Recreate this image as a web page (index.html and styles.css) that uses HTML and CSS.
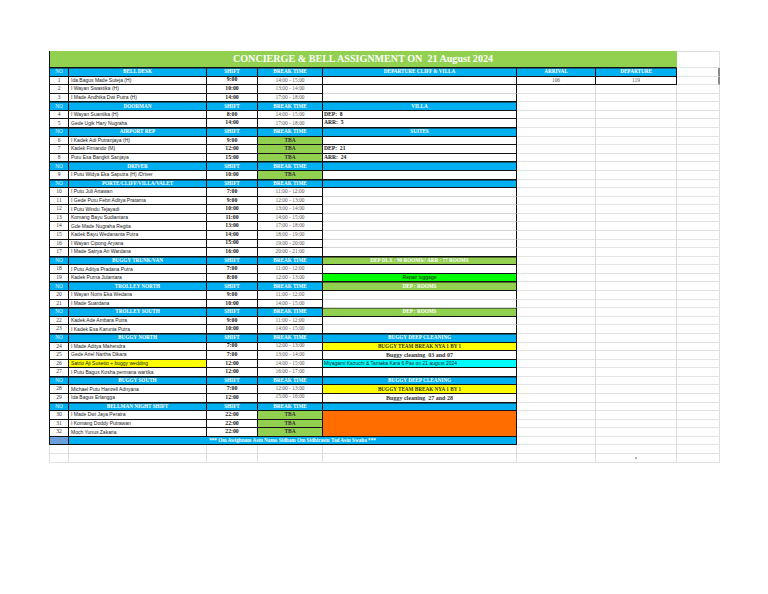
FILE: index.html
```html
<!DOCTYPE html>
<html lang="en">
<head>
<meta charset="utf-8">
<title>Concierge &amp; Bell Assignment</title>
<link rel="stylesheet" href="styles.css">
</head>
<body>
<div class="sheet">
  <div class="title">CONCIERGE &amp; BELL ASSIGNMENT ON &nbsp;21 August 2024</div><div class="g gt"></div>

  <div class="hn">NO</div><div class="h">BELL DESK</div><div class="h">SHIFT</div><div class="h">BREAK TIME</div><div class="h">DEPARTURE CLIFF &amp; VILLA</div><div class="h">ARRIVAL</div><div class="h">DEPARTURE</div><div class="g gm"></div>
  <div class="n">1</div><div class="nm">Ida Bagus Made Suteja (H)</div><div class="s">9:00</div><div class="b">14:00 - 15:00</div><div class="d"></div><div class="v">106</div><div class="v">119</div><div class="g gm"></div>
  <div class="n">2</div><div class="nm">I Wayan Swastika (H)</div><div class="s">10:00</div><div class="b">13:00 - 14:00</div><div class="d dg"></div><div class="g"></div><div class="g"></div><div class="g"></div>
  <div class="n">3</div><div class="nm">I Made Andhika Dwi Putra (H)</div><div class="s">14:00</div><div class="b">17:00 - 18:00</div><div class="d"></div><div class="g"></div><div class="g"></div><div class="g"></div>

  <div class="hn">NO</div><div class="h">DOORMAN</div><div class="h">SHIFT</div><div class="h">BREAK TIME</div><div class="h">VILLA</div><div class="g"></div><div class="g"></div><div class="g"></div>
  <div class="n">4</div><div class="nm">I Wayan Suantika (H)</div><div class="s">8:00</div><div class="b">14:00 - 15:00</div><div class="d dl">DEP: &nbsp;8</div><div class="g"></div><div class="g"></div><div class="g"></div>
  <div class="n">5</div><div class="nm">Gede Ugik Hary Nugraha</div><div class="s">14:00</div><div class="b">17:00 - 18:00</div><div class="d dl">ARR: &nbsp;5</div><div class="g"></div><div class="g"></div><div class="g"></div>

  <div class="hn">NO</div><div class="h">AIRPORT REP</div><div class="h">SHIFT</div><div class="h">BREAK TIME</div><div class="h">SUITES</div><div class="g"></div><div class="g"></div><div class="g"></div>
  <div class="n">6</div><div class="nm">I Kadek Adi Putranjaya (H)</div><div class="s">9:00</div><div class="tba">TBA</div><div class="d"></div><div class="g"></div><div class="g"></div><div class="g"></div>
  <div class="n">7</div><div class="nm">Kadek Firnando (M)</div><div class="s">12:00</div><div class="tba">TBA</div><div class="d dl">DEP: &nbsp;21</div><div class="g"></div><div class="g"></div><div class="g"></div>
  <div class="n">8</div><div class="nm">Putu Esa Bangkit Sanjaya</div><div class="s">15:00</div><div class="tba">TBA</div><div class="d dl">ARR: &nbsp;24</div><div class="g"></div><div class="g"></div><div class="g"></div>

  <div class="hn">NO</div><div class="h">DRIVER</div><div class="h">SHIFT</div><div class="h">BREAK TIME</div><div class="h"></div><div class="g"></div><div class="g"></div><div class="g"></div>
  <div class="n">9</div><div class="nm">I Putu Widya Eka Saputra (H) /Driver</div><div class="s">10:00</div><div class="tba">TBA</div><div class="d"></div><div class="g"></div><div class="g"></div><div class="g"></div>

  <div class="hn">NO</div><div class="h">PORTE/CLIFF/VILLA/VALET</div><div class="h">SHIFT</div><div class="h">BREAK TIME</div><div class="h"></div><div class="g"></div><div class="g"></div><div class="g"></div>
  <div class="n">10</div><div class="nm">I Putu Juli Artawan</div><div class="s">7:00</div><div class="b">11:00 - 12:00</div><div class="d dg"></div><div class="g"></div><div class="g"></div><div class="g"></div>
  <div class="n">11</div><div class="nm">I Gede Putu Febri Aditya Pratama</div><div class="s">9:00</div><div class="b">12:00 - 13:00</div><div class="d dg"></div><div class="g"></div><div class="g"></div><div class="g"></div>
  <div class="n">12</div><div class="nm">I Putu Windu Tejayadi</div><div class="s">10:00</div><div class="b">13:00 - 14:00</div><div class="d dg"></div><div class="g"></div><div class="g"></div><div class="g"></div>
  <div class="n">13</div><div class="nm">Komang Bayu Sudiantara</div><div class="s">11:00</div><div class="b">14:00 - 15:00</div><div class="d dg"></div><div class="g"></div><div class="g"></div><div class="g"></div>
  <div class="n">14</div><div class="nm">Gde Made Nugraha Regita</div><div class="s">13:00</div><div class="b">17:00 - 18:00</div><div class="d dg"></div><div class="g"></div><div class="g"></div><div class="g"></div>
  <div class="n">15</div><div class="nm">Kadek Bayu Wedananta Putra</div><div class="s">14:00</div><div class="b">18:00 - 19:00</div><div class="d dg"></div><div class="g"></div><div class="g"></div><div class="g"></div>
  <div class="n">16</div><div class="nm">I Wayan Cipong Aryana</div><div class="s">15:00</div><div class="b">19:00 - 20:00</div><div class="d dg"></div><div class="g"></div><div class="g"></div><div class="g"></div>
  <div class="n">17</div><div class="nm">I Made Satrya Ari Wardana</div><div class="s">16:00</div><div class="b">20:00 - 21:00</div><div class="d"></div><div class="g"></div><div class="g"></div><div class="g"></div>

  <div class="hn">NO</div><div class="h">BUGGY TRUNK/VAN</div><div class="h">SHIFT</div><div class="h">BREAK TIME</div><div class="gr">DEP DLX : 90 ROOMS// ARR : 77 ROOMS</div><div class="g"></div><div class="g"></div><div class="g"></div>
  <div class="n">18</div><div class="nm">I Putu Aditya Pradana Putra</div><div class="s">7:00</div><div class="b">11:00 - 12:00</div><div class="d"></div><div class="g"></div><div class="g"></div><div class="g"></div>
  <div class="n">19</div><div class="nm">Kadek Purna Julantara</div><div class="s">8:00</div><div class="b">12:00 - 13:00</div><div class="lg">Repair luggage</div><div class="g"></div><div class="g"></div><div class="g"></div>

  <div class="hn">NO</div><div class="h">TROLLEY NORTH</div><div class="h">SHIFT</div><div class="h">BREAK TIME</div><div class="gr">DEP : ROOMS</div><div class="g"></div><div class="g"></div><div class="g"></div>
  <div class="n">20</div><div class="nm">I Wayan Noris Eka Wedana</div><div class="s">9:00</div><div class="b">11:00 - 12:00</div><div class="d dg"></div><div class="g"></div><div class="g"></div><div class="g"></div>
  <div class="n">21</div><div class="nm">I Made Suardana</div><div class="s">10:00</div><div class="b">14:00 - 15:00</div><div class="d dg"></div><div class="g"></div><div class="g"></div><div class="g"></div>

  <div class="hn">NO</div><div class="h">TROLLEY SOUTH</div><div class="h">SHIFT</div><div class="h">BREAK TIME</div><div class="gr">DEP : ROOMS</div><div class="g"></div><div class="g"></div><div class="g"></div>
  <div class="n">22</div><div class="nm">Kadek Ade Ambara Putra</div><div class="s">9:00</div><div class="b">11:00 - 12:00</div><div class="d dg"></div><div class="g"></div><div class="g"></div><div class="g"></div>
  <div class="n">23</div><div class="nm">I Kadek Esa Karunia Putra</div><div class="s">10:00</div><div class="b">14:00 - 15:00</div><div class="d"></div><div class="g"></div><div class="g"></div><div class="g"></div>

  <div class="hn">NO</div><div class="h">BUGGY NORTH</div><div class="h">SHIFT</div><div class="h">BREAK TIME</div><div class="h">BUGGY DEEP CLEANING</div><div class="g"></div><div class="g"></div><div class="g"></div>
  <div class="n">24</div><div class="nm">I Made Aditya Mahendra</div><div class="s">7:00</div><div class="b up">12:00 - 13:00</div><div class="ye">BUGGY TEAM BREAK NYA 1 BY 1</div><div class="g"></div><div class="g"></div><div class="g"></div>
  <div class="n">25</div><div class="nm">Gede Ariel Nartha Dikara</div><div class="s">7:00</div><div class="b up">13:00 - 14:00</div><div class="bc">Buggy cleaning &nbsp;03 and 07</div><div class="g"></div><div class="g"></div><div class="g"></div>
  <div class="n">26</div><div class="nm hl">Satrio Aji Susetio + buggy wedding</div><div class="s">12:00</div><div class="b">14:00 - 15:00</div><div class="cy">Miyagami Kazuchi &amp; Tamaka Kara 6 Pax on 21 august 2024</div><div class="g"></div><div class="g"></div><div class="g"></div>
  <div class="n">27</div><div class="nm">I Putu Bagus Kosha permana wartika</div><div class="s">12:00</div><div class="b up">16:00 - 17:00</div><div class="d"></div><div class="g"></div><div class="g"></div><div class="g"></div>

  <div class="hn">NO</div><div class="h">BUGGY SOUTH</div><div class="h">SHIFT</div><div class="h">BREAK TIME</div><div class="h">BUGGY DEEP CLEANING</div><div class="g"></div><div class="g"></div><div class="g"></div>
  <div class="n">28</div><div class="nm">Michael Putu Hanzell Adnyana</div><div class="s">7:00</div><div class="b up">12:00 - 13:00</div><div class="ye">BUGGY TEAM BREAK NYA 1 BY 1</div><div class="g"></div><div class="g"></div><div class="g"></div>
  <div class="n">29</div><div class="nm">Ida Bagus Erlangga</div><div class="s">12:00</div><div class="b up">15:00 - 16:00</div><div class="bc">Buggy cleaning &nbsp;27 and 28</div><div class="g"></div><div class="g"></div><div class="g"></div>

  <div class="hn">NO</div><div class="h">BELLMAN NIGHT SHIFT</div><div class="h">SHIFT</div><div class="h">BREAK TIME</div><div class="h"></div><div class="g"></div><div class="g"></div><div class="g"></div>
  <div class="n">30</div><div class="nm">I Made Dwi Jaya Peraira</div><div class="s">22:00</div><div class="tba">TBA</div><div class="or"></div><div class="g"></div><div class="g"></div><div class="g"></div>
  <div class="n">31</div><div class="nm">I Komang Doddy Putrawan</div><div class="s">22:00</div><div class="tba">TBA</div><div class="g"></div><div class="g"></div><div class="g"></div>
  <div class="n">32</div><div class="nm">Moch Yunus Zakaria</div><div class="s">22:00</div><div class="tba">TBA</div><div class="g"></div><div class="g"></div><div class="g"></div>

  <div class="ft"></div><div class="fm">*** Om Awighnam Astu Namo Sidham Om Sidhirastu Tad Astu Swaha ***</div><div class="g"></div><div class="g"></div><div class="g"></div>

  <div class="g gl"></div><div class="g"></div><div class="g"></div><div class="g"></div><div class="g"></div><div class="g"></div><div class="g"></div><div class="g"></div>
  <div class="g gl"></div><div class="g"></div><div class="g"></div><div class="g"></div><div class="g"></div><div class="g"></div><div class="g"><span class="dot"></span></div><div class="g"></div>
</div>
</body>
</html>
```

FILE: styles.css
```css
* { box-sizing: border-box; margin: 0; padding: 0; }

body {
  background: #ffffff;
  font-family: "Liberation Serif", serif;
}

.sheet {
  display: grid;
  grid-template-columns: 20px 138px 51px 65px 194px 79px 81px 43px;
  grid-template-rows: 17px repeat(44, 8.585px) repeat(2, 8.6px);
  width: 671px;
  margin: 51px 0 0 49px;
}

.sheet > div {
  display: flex;
  align-items: center;
  justify-content: center;
  white-space: nowrap;
  overflow: hidden;
  border-right: 1px solid #111;
  border-bottom: 1px solid #111;
  font-size: 5.5px;
  line-height: 1;
  color: #222;
  background: #fff;
}

.sheet > .title {
  grid-column: span 7;
  background: #92d050;
  color: #fff;
  font-weight: bold;
  font-size: 10.1px;
  border-left: 1px solid #111;
  border-right-color: #92d050;
  border-bottom-color: #111;
  padding-top: 1px;
}

.sheet > .hn,
.sheet > .h {
  background: #00b0f0;
  color: #fff;
  font-weight: bold;
  font-size: 5.2px;
  box-shadow: inset 0 0.6px 0 #111;
}

.sheet > .hn {
  font-weight: normal;
  border-left: 1px solid #111;
  color: #e6f6ff;
}

.sheet > .n {
  border-left: 1px solid #111;
  color: #333;
}

.sheet > .nm {
  justify-content: flex-start;
  padding-left: 2px;
  font-family: "Liberation Sans", sans-serif;
  font-size: 5px;
}

.sheet > .nm.hl { background: #ffff00; }

.sheet > .s {
  font-weight: bold;
  font-size: 5.8px;
}

.sheet > .b {
  color: #5a5a5a;
  font-size: 5.4px;
}

.sheet > .b.up { align-items: flex-start; padding-top: 0.5px; }

.sheet > .tba {
  background: #92d050;
  font-weight: bold;
  font-size: 5.4px;
  color: #333;
}

.sheet > .d { background: #fff; }
.sheet > .d.dg { border-bottom-color: #d6d6d6; }

.sheet > .dl {
  justify-content: flex-start;
  padding-left: 1px;
  font-weight: bold;
  font-size: 5.6px;
}

.sheet > .v {
  color: #555;
  font-size: 5.4px;
}

.sheet > .gr {
  background: #92d050;
  color: #fff;
  font-weight: bold;
  font-size: 5.2px;
  box-shadow: inset 0 0.6px 0 #111;
}

.sheet > .lg {
  background: #00ff00;
  font-family: "Liberation Sans", sans-serif;
  font-size: 5px;
  color: #111;
}

.sheet > .ye {
  background: #ffff00;
  font-weight: bold;
  font-size: 5.2px;
  color: #333;
}

.sheet > .bc {
  font-weight: bold;
  font-size: 6px;
  color: #333;
}

.sheet > .cy {
  background: #00ffff;
  justify-content: flex-start;
  padding-left: 1px;
  font-family: "Liberation Sans", sans-serif;
  font-size: 5px;
  color: #222;
}

.sheet > .or {
  grid-row: span 3;
  background: #ff6d00;
}

.sheet > .ft {
  background: #6a9fdb;
  border-left: 1px solid #111;
}

.sheet > .fm {
  grid-column: span 4;
  background: #00b0f0;
  color: #fff;
  font-weight: bold;
  font-size: 5.2px;
}

.sheet > .g {
  border-right-color: #dedede;
  border-bottom-color: #e3e3e3;
  background: #fff;
}

.sheet > .g.gt { border-top: 1px solid #dedede; }
.sheet > .g.gm { border-right: 2px solid #8c8c8c; }
.sheet > .g.gl { border-left: 1px solid #dedede; }

.dot {
  display: block;
  width: 2px;
  height: 2px;
  background: #b0b0b0;
}
```
